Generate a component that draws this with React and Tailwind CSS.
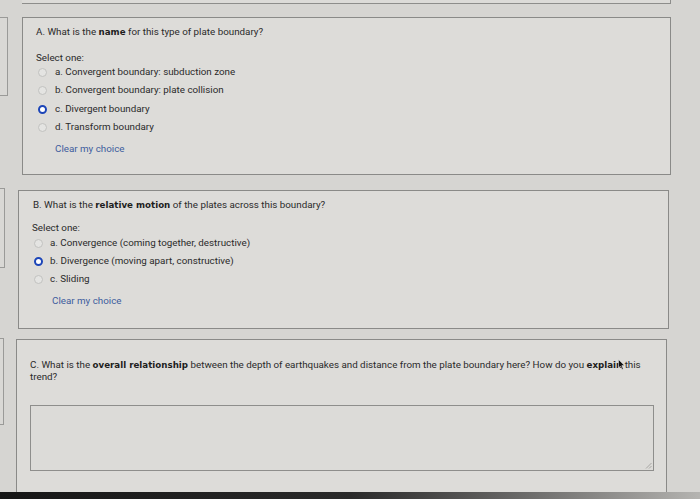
import React from "react";

function Radio({ checked }) {
  if (checked) {
    return (
      <span className="inline-block w-[9px] h-[9px] rounded-full border-[2.5px] border-[#1c45b8] bg-white shrink-0" />
    );
  }
  return (
    <span className="inline-block w-[9px] h-[9px] rounded-full border border-[#c2c2c0] bg-[#e4e4e2] shrink-0" />
  );
}

function Option({ checked, label, radioMl, gap, h }) {
  return (
    <div className={`flex items-center ${h}`}>
      <span className={radioMl}>
        <Radio checked={checked} />
      </span>
      <span className={`${gap} text-[9.8px] text-[#2a2a2a]`}>{label}</span>
    </div>
  );
}

const B = ({ children }) => (
  <span className="font-['DejaVu_Sans',sans-serif] font-bold text-[8.7px] leading-[10px] text-[#1e1e1e]">{children}</span>
);

export default function App() {
  return (
    <div className="w-[700px] h-[499px] overflow-hidden bg-[#d6d5d2] font-['Roboto',sans-serif] flex flex-col relative">
      {/* previous card bottom */}
      <div className="ml-[22px] w-[649px] h-[4px] border-b border-r border-[#8d8d8b] bg-[#dcdbd8]" />

      {/* Question A */}
      <div className="flex items-start mt-[13px]">
        <div className="w-[8px] h-[79px] border-t border-r border-b border-[#9a9a98] bg-[#d9d8d5]" />
        <div className="ml-[14px] w-[649px] h-[158px] border border-[#8a8a88] bg-[#dddcd9] pt-[8px] pl-[13px] flex flex-col">
          <div className="h-[12px] leading-[12px] text-[9.8px] text-[#2a2a2a]">
            A. What is the <B>name</B> for this type of plate boundary?
          </div>
          <div className="mt-[14px] h-[12px] leading-[12px] text-[9.8px] text-[#2a2a2a]">Select one:</div>
          <div className="mt-[-1px] flex flex-col">
            <Option label="a. Convergent boundary: subduction zone" radioMl="ml-[2px] flex" gap="ml-[8px]" h="h-[18.5px]" />
            <Option label="b. Convergent boundary: plate collision" radioMl="ml-[2px] flex" gap="ml-[8px]" h="h-[18.5px]" />
            <Option checked label="c. Divergent boundary" radioMl="ml-[2px] flex" gap="ml-[8px]" h="h-[18.5px]" />
            <Option label="d. Transform boundary" radioMl="ml-[2px] flex" gap="ml-[8px]" h="h-[18.5px]" />
          </div>
          <div className="mt-[6px] ml-[19px] h-[12px] leading-[12px] text-[9.8px] text-[#3d5c9e]">Clear my choice</div>
        </div>
      </div>

      {/* Question B */}
      <div className="flex items-start mt-[15px]">
        <div className="w-[5px] h-[80px] mt-[-2px] border-t border-r border-b border-[#9a9a98] bg-[#d9d8d5]" />
        <div className="ml-[13px] w-[651px] h-[139px] border border-[#8a8a88] bg-[#dddcd9] pt-[8px] pl-[14px] flex flex-col">
          <div className="h-[12px] leading-[12px] text-[9.8px] text-[#2a2a2a]">
            B. What is the <B>relative motion</B> of the plates across this boundary?
          </div>
          <div className="mt-[11px] ml-[-1px] h-[12px] leading-[12px] text-[9.8px] text-[#2a2a2a]">Select one:</div>
          <div className="flex flex-col">
            <Option label="a. Convergence (coming together, destructive)" radioMl="ml-[1px] flex" gap="ml-[7px]" h="h-[18px]" />
            <Option checked label="b. Divergence (moving apart, constructive)" radioMl="ml-[1px] flex" gap="ml-[7px]" h="h-[18px]" />
            <Option label="c. Sliding" radioMl="ml-[1px] flex" gap="ml-[7px]" h="h-[18px]" />
          </div>
          <div className="mt-[7px] ml-[19px] h-[12px] leading-[12px] text-[9.8px] text-[#3d5c9e]">Clear my choice</div>
        </div>
      </div>

      {/* Question C */}
      <div className="flex items-start mt-[10px]">
        <div className="w-[4px] h-[87px] mt-[-1px] border-t border-r border-b border-[#9a9a98] bg-[#d9d8d5]" />
        <div className="ml-[12px] w-[651px] h-[155px] border border-[#8a8a88] bg-[#dddcd9] pt-[19px] pl-[13px] pr-[12px] flex flex-col relative">
          <div className="leading-[12px] text-[9.8px] text-[#2a2a2a]">
            <span>C. What is the </span>
            <B>overall relationship</B>
            <span> between the depth of earthquakes and distance from the plate boundary here? How do you </span>
            <B>explain</B> <span>this</span> <span>trend?</span>
          </div>
          <div className="mt-[22px] w-[624px] h-[66px] border border-[#8e8e8c] bg-[#dcdbd8] relative">
            <svg className="absolute right-[1px] bottom-[1px]" width="7" height="7" viewBox="0 0 7 7">
              <line x1="6.5" y1="1" x2="1" y2="6.5" stroke="#9a9a98" strokeWidth="0.8" />
              <line x1="6.5" y1="4" x2="4" y2="6.5" stroke="#9a9a98" strokeWidth="0.8" />
            </svg>
          </div>
          {/* mouse cursor */}
          <svg className="absolute left-[601px] top-[19px]" width="7" height="11" viewBox="0 0 7 11">
            <path d="M0.5 0.5 L0.5 9 L2.5 7 L4 10.5 L5.3 10 L3.8 6.6 L6.5 6.6 Z" fill="#111" stroke="#eee" strokeWidth="0.5" />
          </svg>
        </div>
      </div>

      {/* bottom bezel */}
      <div className="absolute left-0 bottom-0 w-[700px] h-[7px] bg-gradient-to-r from-[#161616] via-[#2a2a2a] to-[#b5b4b1]" />
    </div>
  );
}
